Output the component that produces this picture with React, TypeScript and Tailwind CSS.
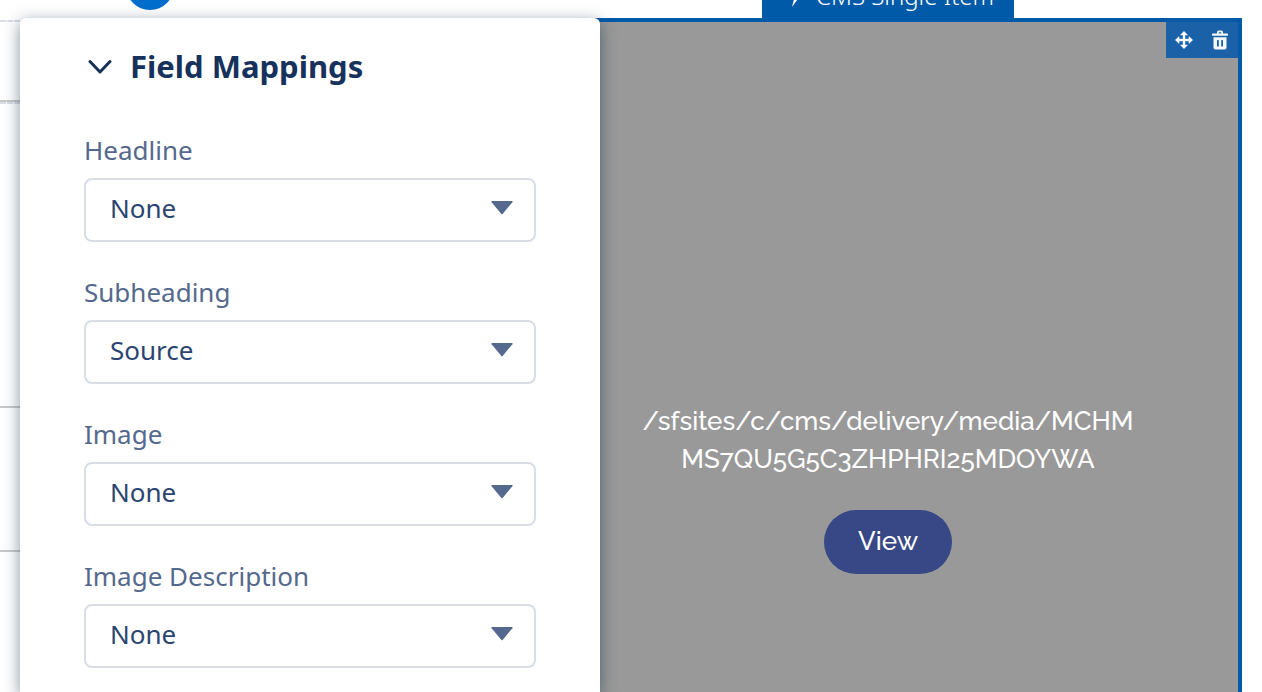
const fields = [
  { id: "headline", label: "Headline", value: "None" },
  { id: "subheading", label: "Subheading", value: "Source" },
  { id: "image", label: "Image", value: "None" },
  { id: "image-description", label: "Image Description", value: "None" },
]

const options = ["None", "Source", "Title", "Excerpt"]

function MoveIcon() {
  return (
    <svg viewBox="0 0 18 18" className="size-[18px]" fill="currentColor" aria-hidden="true">
      <path d="M7.800 3h2.400v4.800H15v2.400h-4.800V15H7.800v-4.800H3V7.800h4.800z" />
      <path d="M9 0l3.600 3.700q.3.600-.3.600H5.700q-.6 0-.3-.6zM9 18l3.600-3.700q.3-.6-.3-.6H5.700q-.6 0-.3.600zM0 9l3.700-3.600q.6-.3.600.3v6.600q0 .6-.6.300zM18 9l-3.700-3.600q-.6-.3-.6.300v6.600q0 .6.600.3z" />
    </svg>
  )
}

function TrashIcon() {
  return (
    <svg viewBox="0 0 18 20" className="h-5 w-[18px]" fill="currentColor" aria-hidden="true">
      <path d="M6 3.500V2q0-1.500 1.500-1.500h3Q12 .5 12 2v1.500h4.300q.7 0 .7.700v.8q0 .7-.7.700H1.700Q1 5.700 1 5v-.8q0-.7.700-.7zm1.800 0h2.400V2.200H7.800z" />
      <path
        fillRule="evenodd"
        d="M2.500 7.300h13v10.200q0 2-2 2h-9q-2 0-2-2zM6 10.500V16q0 .5.500.5h.8q.5 0 .5-.5v-5.500q0-.5-.5-.5h-.8q-.5 0-.5.500zm4.200 0V16q0 .5.500.5h.8q.5 0 .5-.5v-5.500q0-.5-.5-.5h-.8q-.5 0-.5.500z"
      />
    </svg>
  )
}

function FieldSelect({ id, label, value }: { id: string; label: string; value: string }) {
  return (
    <div>
      <label htmlFor={id} className="block text-[26px] leading-9 text-[#54698d]">
        {label}
      </label>
      <div className="mt-2.5 grid items-center">
        <select
          id={id}
          defaultValue={value}
          className="col-start-1 row-start-1 h-16 w-full appearance-none rounded-lg border-2 border-[#d8dde6] bg-white px-6 pb-1 text-[26px] text-[#2b4570]"
        >
          {options.map((option) => (
            <option key={option}>{option}</option>
          ))}
        </select>
        <svg
          viewBox="0 0 22 14"
          className="pointer-events-none col-start-1 row-start-1 mr-[23px] mb-1 h-3.5 w-[22px] justify-self-end"
          fill="#54698d"
          aria-hidden="true"
        >
          <path d="M1 0h20q1 .3.400 1.200L11.600 13q-.6.700-1.200 0L.6 1.200Q0 .3 1 0z" />
        </svg>
      </div>
    </div>
  )
}

function FieldMappings() {
  return (
    <section className="flex-1 rounded-t-[6px] bg-white px-16 pt-[26px] shadow-[0_4px_16px_0_rgba(10,40,60,0.5)]">
      <h2>
        <button type="button" className="flex items-center gap-[18px] text-[31px] leading-[44px] font-bold text-[#16325c]">
          <svg
            viewBox="0 0 24 16"
            className="mt-0.5 ml-1 h-4 w-6"
            fill="none"
            stroke="currentColor"
            strokeWidth="3"
            strokeLinecap="round"
            strokeLinejoin="round"
            aria-hidden="true"
          >
            <path d="M2 2.500l10 10.500 10-10.500" />
          </svg>
          Field Mappings
        </button>
      </h2>
      <div className="mt-11 flex flex-col gap-8">
        {fields.map((field) => (
          <FieldSelect key={field.id} {...field} />
        ))}
      </div>
    </section>
  )
}

function SingleItem() {
  return (
    <main className="-ml-[66px] mr-5 flex min-w-0 flex-1 flex-col">
      <div className="flex h-[18px] w-[252px] items-end self-center bg-[#005aa8] pb-1 pl-6 text-white">
        <div className="flex items-center gap-3 text-2xl leading-9 font-light whitespace-nowrap">
          <svg viewBox="0 0 18 28" className="h-7 w-[18px]" fill="currentColor" aria-hidden="true">
            <path d="M5 0h9l-4 10h7L6 25l3-12H2z" />
          </svg>
          CMS Single Item
        </div>
      </div>
      <div className="flex flex-1 flex-col border-x-4 border-t-4 border-[#005aa8] bg-[#999]">
        <div className="flex self-end bg-[#1a61a8] text-[#f4f6f9]">
          <button type="button" aria-label="Move" className="grid size-9 place-items-center">
            <MoveIcon />
          </button>
          <button type="button" aria-label="Delete" className="grid size-9 place-items-center">
            <TrashIcon />
          </button>
        </div>
        <div className="mt-[344px] flex flex-col items-center font-['Raleway','Lato',sans-serif] text-[26px] font-medium text-white">
          <p className="text-center leading-[38px]">
            /sfsites/c/cms/delivery/media/MCHM
            <br />
            MS7QU5G5C3ZHPHRI25MDOYWA
          </p>
          <a href="#" className="mt-8 flex h-16 w-32 items-center justify-center rounded-full bg-[#384785] pb-0.5">
            View
          </a>
        </div>
      </div>
    </main>
  )
}

export default function App() {
  return (
    <div className="flex h-screen overflow-hidden bg-white font-['Noto_Sans',sans-serif]">
      <div className="w-5 shrink-0">
        <div className="h-[22px] border-b-2 border-dashed border-[#d8dde6]" />
        <div className="h-20 border-b-2 border-[#c9c9c9]" />
        <div className="border-b-2 border-dashed border-[#d8dde6]" />
        <div className="h-[304px] border-b-2 border-[#c9c9c9]" />
        <div className="h-36 border-b-2 border-[#c9c9c9]" />
      </div>
      <div className="z-10 flex w-[580px] shrink-0 flex-col">
        <div className="flex h-[18px] items-end pb-2 pl-[106px]">
          <div className="size-12 shrink-0 rounded-full bg-[#006dcc]" />
        </div>
        <FieldMappings />
      </div>
      <SingleItem />
    </div>
  )
}
